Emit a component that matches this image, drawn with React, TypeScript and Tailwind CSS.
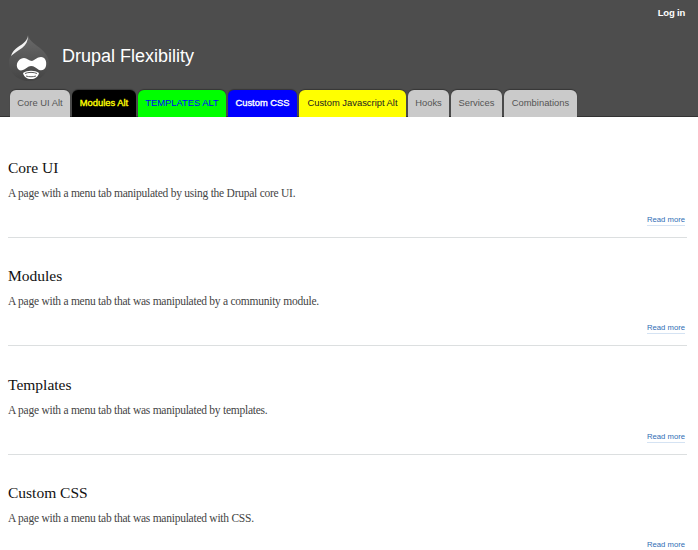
const tabs = [
  { label: "Core UI Alt", width: "w-[60px]", color: "bg-[#cacaca] text-[#555]" },
  { label: "Modules Alt", width: "w-[64px]", color: "bg-black text-[#ffff00] [-webkit-text-stroke:0.35px_#ffff00]" },
  { label: "TEMPLATES ALT", width: "w-[88px]", color: "bg-[#00ff00] text-[#0000ff]" },
  { label: "Custom CSS", width: "w-[69px]", color: "bg-[#0000ff] text-white [-webkit-text-stroke:0.35px_#fff]" },
  { label: "Custom Javascript Alt", width: "w-[107px]", color: "bg-[#ffff00] text-[#222]" },
  { label: "Hooks", width: "w-[41px]", color: "bg-[#cacaca] text-[#555]" },
  { label: "Services", width: "w-[51px]", color: "bg-[#cacaca] text-[#555]" },
  { label: "Combinations", width: "w-[73px]", color: "bg-[#cacaca] text-[#555]" },
];

const articles = [
  { title: "Core UI", body: "A page with a menu tab manipulated by using the Drupal core UI." },
  { title: "Modules", body: "A page with a menu tab that was manipulated by a community module." },
  { title: "Templates", body: "A page with a menu tab that was manipulated by templates." },
  { title: "Custom CSS", body: "A page with a menu tab that was manipulated with CSS." },
];

function DrupalLogo() {
  return (
    <svg viewBox="0 0 40 46" className="h-[46px] w-[40px]">
      <defs>
        <linearGradient id="drop" x1="0" y1="0" x2="0" y2="1">
          <stop offset="0" stopColor="#6a6a6a" />
          <stop offset="1" stopColor="#444" />
        </linearGradient>
      </defs>
      <path d="M19 0C20 5 24 8 31 13C37 18 40 23 40 28C40 38 31 46 20 46C9 46 0 38 0 28C0 20 5 15 11 11C15 8 18 5 19 0z" fill="url(#drop)" />
      <path d="M19 1C18 6 14 9 9 12C6 14 3 17 2 21C5 18 9 16 13 13C17 10 19 6 19 1z" fill="#f4f4f4" />
      <path d="M8 32C7 27 11 23 15 23C18 23 20 26 23 26C26 25 28 22 32 22C36 22 38 26 37 31C36 35 33 36 30 35C27 33 25 31 22 31C19 31 17 34 14 35C11 36 9 35 8 32z" fill="#fff" />
      <path d="M14 38C18 35 26 35 30 38C29 42 26 44 22 44C18 44 15 42 14 38z" fill="#fff" />
      <path d="M16 38.500C19 37 25 37 28 38.500M17 41C20 42 24 42 27 41" stroke="#4a4a4a" strokeWidth="0.9" fill="none" />
    </svg>
  );
}

export default function App() {
  return (
    <div className="h-[550px] overflow-hidden bg-white font-['Liberation_Sans',sans-serif]">
      <header className="border-b border-[#333] bg-[#4d4d4d]">
        <div className="flex h-[26px] items-center justify-end pr-[13px]">
          <a className="text-[9.5px] font-bold tracking-[-0.2px] text-white">Log in</a>
        </div>
        <div className="flex h-[64px] items-start pl-[9px] pt-[9px]">
          <DrupalLogo />
          <h1 className="ml-[13px] mt-[9px] text-[18px] leading-[24px] text-white">Drupal Flexibility</h1>
        </div>
        <nav className="-mb-px flex gap-[2px] pl-[10px]">
          {tabs.map((t) => (
            <a
              key={t.label}
              className={`flex h-[27px] shrink-0 items-center justify-center whitespace-nowrap rounded-t-[6px] text-[9.4px] shadow-[0_-1px_1px_rgba(0,0,0,0.3)] ${t.width} ${t.color}`}
            >
              {t.label}
            </a>
          ))}
        </nav>
      </header>
      <main className="pl-[8px] pr-[11px] pt-[40.5px]">
        {articles.map((a) => (
          <article key={a.title} className="mb-[28.5px] h-[80px] border-b border-[#dcdfe0] font-['Liberation_Serif',serif]">
            <h2 className="text-[15.5px] leading-[20px] text-[#111]">{a.title}</h2>
            <p className="mt-[6px] text-[11.5px] leading-[18px] tracking-[-0.25px] text-[#444]">{a.body}</p>
            <div className="mt-[12px] flex justify-end pr-[2px]">
              <a className="border-b border-[#d5e3f3] font-['Liberation_Sans',sans-serif] text-[7.7px] leading-[11px] text-[#2f6db5]">Read more</a>
            </div>
          </article>
        ))}
      </main>
    </div>
  );
}
